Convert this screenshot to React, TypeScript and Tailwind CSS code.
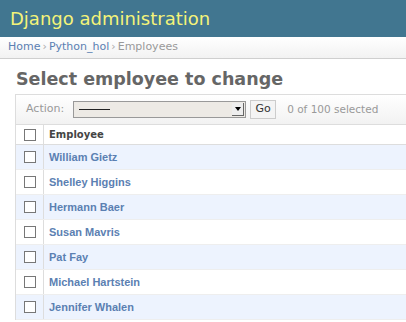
import React from "react";

const names = [
  "William Gietz",
  "Shelley Higgins",
  "Hermann Baer",
  "Susan Mavris",
  "Pat Fay",
  "Michael Hartstein",
  "Jennifer Whalen",
];

function Box() {
  return <span className="block w-[12px] h-[12px] border border-[#777] bg-white" />;
}

export default function App() {
  return (
    <div className="w-[406px] h-[322px] overflow-hidden bg-white" style={{ fontFamily: '"DejaVu Sans", sans-serif' }}>
      <div className="h-[37px] bg-[#417690] flex items-center pl-[10px]">
        <span className="text-[18px] text-[#f4f379] leading-none">Django administration</span>
      </div>
      <div className="h-[22px] bg-gradient-to-b from-[#ffffff] to-[#f2f2f2] border-b border-[#cfcfcf] flex items-center pl-[8px] text-[11px] text-[#999]">
        <span className="text-[#5b80b2]">Home</span>
        <span className="mx-[2px] text-[#aaa]">›</span>
        <span className="text-[#5b80b2]">Python_hol</span>
        <span className="mx-[2px] text-[#aaa]">›</span>
        <span>Employees</span>
      </div>
      <div className="pl-[16px] pt-[9px]">
        <h1 className="text-[17.5px] font-bold text-[#666] leading-[22px] mb-[4px]">Select employee to change</h1>
      </div>
      <div className="ml-[15px] border-l border-t border-[#ddd]">
        <div className="h-[30px] flex items-center pl-[10px] bg-gradient-to-b from-[#ffffff] to-[#f2f2f2] border-b border-[#ddd] text-[11px] text-[#999]">
          <span>Action:</span>
          <div className="ml-[9px] w-[173px] h-[17px] bg-[#edeae5] border border-[#999] flex items-center">
            <span className="ml-[5px] w-[31px] h-[1px] bg-[#222]" />
            <span className="ml-auto mr-[1px] w-[12px] h-[13px] bg-[#eee] border-r border-b border-[#666] flex items-center justify-center">
              <span className="w-0 h-0 border-l-[3px] border-r-[3px] border-t-[4px] border-l-transparent border-r-transparent border-t-[#000]" />
            </span>
          </div>
          <div className="ml-[4px] h-[19px] w-[26px] border border-[#ccc] bg-[#f4f4f4] flex items-center justify-center text-[#333] text-[11px]">Go</div>
          <span className="ml-[11px] text-[10.5px]">0 of 100 selected</span>
        </div>
        <div className="h-[20px] flex border-b border-[#ddd] bg-white">
          <div className="w-[28px] flex items-center pl-[8px] border-r border-[#ddd]"><Box /></div>
          <div className="pl-[5px] flex items-center text-[10px] font-bold text-[#444]">Employee</div>
        </div>
        {names.map((n, i) => (
          <div key={n} className={`h-[25px] flex border-b border-[#eee] ${i % 2 === 0 ? "bg-[#edf3fe]" : "bg-white"}`}>
            <div className="w-[28px] flex items-center pl-[8px] border-r border-[#ddd]"><Box /></div>
            <div className="pl-[5px] flex items-center text-[11px] font-bold text-[#5b80b2]" style={{ fontFamily: '"Liberation Sans", Arial, sans-serif' }}>{n}</div>
          </div>
        ))}
      </div>
    </div>
  );
}
